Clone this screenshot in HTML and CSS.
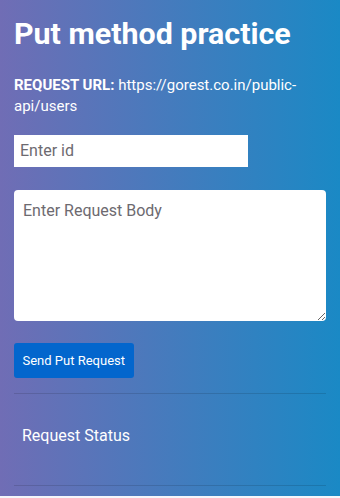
FILE: index.html
```html
<!DOCTYPE html>
<html>
<head>
<meta charset="utf-8">
<link rel="stylesheet" href="styles.css">
</head>
<body>
<div class="page">
  <h1 class="title">Put method practice</h1>
  <p class="url"><strong>REQUEST URL:</strong> https://gorest.co.in/public-api/users</p>
  <input class="id-input" type="text" placeholder="Enter id">
  <textarea class="body-input" placeholder="Enter Request Body"></textarea>
  <button class="send-btn">Send Put Request</button>
  <hr class="rule">
  <div class="status">Request Status</div>
  <hr class="rule">
</div>
</body>
</html>
```
FILE: styles.css
```css
html, body {
  margin: 0;
  padding: 0;
  background: #f4f6fb;
}
body {
  font-family: Roboto, "Liberation Sans", sans-serif;
  color: #fff;
}
.page {
  box-sizing: border-box;
  height: 496px;
  padding: 14px 14px 0 14px;
  background: linear-gradient(to right, #706db5, #1a89c5);
  display: flex;
  flex-direction: column;
  align-items: flex-start;
}
.title {
  margin: 2px 0 0 0;
  font-size: 30.4px;
  font-weight: 700;
  line-height: 36px;
}
.url {
  margin: 23px 0 0 0;
  font-size: 15px;
  line-height: 20.5px;
}
.id-input {
  margin-top: 18.5px;
  box-sizing: border-box;
  width: 234px;
  height: 32px;
  border: none;
  border-radius: 0;
  padding: 0 6px;
  font-family: Roboto, "Liberation Sans", sans-serif;
  font-size: 16px;
  outline: none;
}
.id-input::placeholder,
.body-input::placeholder {
  color: #6d6a70;
}
.body-input {
  margin-top: 23px;
  box-sizing: border-box;
  width: 312px;
  height: 131px;
  border: none;
  border-radius: 4px;
  padding: 11px 9px;
  font-family: Roboto, "Liberation Sans", sans-serif;
  font-size: 16px;
  outline: none;
}
.send-btn {
  margin-top: 22px;
  box-sizing: border-box;
  height: 35px;
  padding: 0 8.5px;
  border: none;
  border-radius: 3px;
  background: #0366cd;
  color: #fff;
  font-family: Roboto, "Liberation Sans", sans-serif;
  font-size: 13px;
}
.rule {
  align-self: stretch;
  margin: 15px 0 0 0;
  border: none;
  border-top: 1px solid rgba(0, 0, 0, 0.12);
  height: 0;
}
.status {
  padding: 32px 8px 0 8px;
  height: 59px;
  font-size: 16px;
  line-height: 20px;
}
.status + .rule {
  margin-top: 0;
}
```
